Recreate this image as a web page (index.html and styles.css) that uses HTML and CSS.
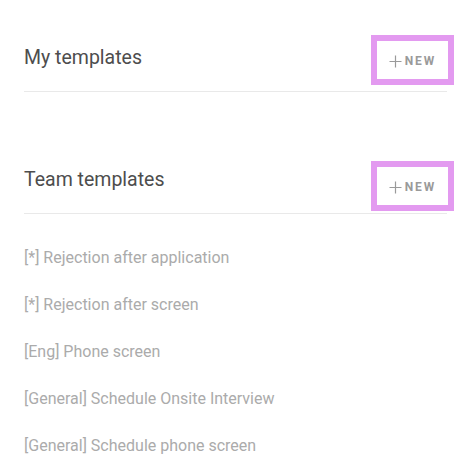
FILE: index.html
```html
<!DOCTYPE html>
<html>
<head>
<meta charset="utf-8">
<link rel="stylesheet" href="styles.css">
</head>
<body>
<div class="page">
  <section class="section mine">
    <div class="section-head">
      <h2 class="title">My templates</h2>
      <button class="new-btn"><svg class="plus" width="13" height="13" viewBox="0 0 13 13"><path d="M6.5 0.5V12.5M0.5 6.5H12.5" stroke="#9a9a9a" stroke-width="1.2" fill="none"/></svg><span class="new-label">NEW</span></button>
    </div>
  </section>
  <section class="section team">
    <div class="section-head">
      <h2 class="title">Team templates</h2>
      <button class="new-btn"><svg class="plus" width="13" height="13" viewBox="0 0 13 13"><path d="M6.5 0.5V12.5M0.5 6.5H12.5" stroke="#9a9a9a" stroke-width="1.2" fill="none"/></svg><span class="new-label">NEW</span></button>
    </div>
    <ul class="list">
      <li>[*] Rejection after application</li>
      <li>[*] Rejection after screen</li>
      <li>[Eng] Phone screen</li>
      <li>[General] Schedule Onsite Interview</li>
      <li>[General] Schedule phone screen</li>
    </ul>
  </section>
</div>
</body>
</html>
```
FILE: styles.css
```css
html, body {
  margin: 0;
  padding: 0;
  background: #ffffff;
}
body {
  font-family: Roboto, "Open Sans", sans-serif;
}
.page {
  padding: 35px 27px 0 24px;
}
.section-head {
  display: flex;
  justify-content: space-between;
  align-items: flex-start;
  padding-bottom: 6px;
  border-bottom: 1px solid #e9e9e9;
}
.title {
  margin: 11px 0 0 0;
  font-size: 19.5px;
  font-weight: 400;
  color: #4d4d4d;
  line-height: 24px;
}
.team .section-head {
  padding-bottom: 2px;
}
.team .title {
  margin-top: 7px;
}
.new-btn {
  box-sizing: border-box;
  width: 83px;
  height: 50px;
  margin-right: -7px;
  border: 6px solid #e39af0;
  background: #fff;
  display: flex;
  align-items: center;
  justify-content: center;
  gap: 3px;
  padding: 2px 0 0 0;
  font-family: inherit;
  cursor: pointer;
}
.plus {
  display: block;
}
.new-label {
  font-size: 12px;
  font-weight: 700;
  letter-spacing: 2px;
  color: #9a9a9a;
}
.team {
  margin-top: 69px;
}
.list {
  list-style: none;
  margin: 20px 0 0 0;
  padding: 0;
}
.list li {
  font-size: 16px;
  line-height: 47px;
  color: #ababab;
}
```
